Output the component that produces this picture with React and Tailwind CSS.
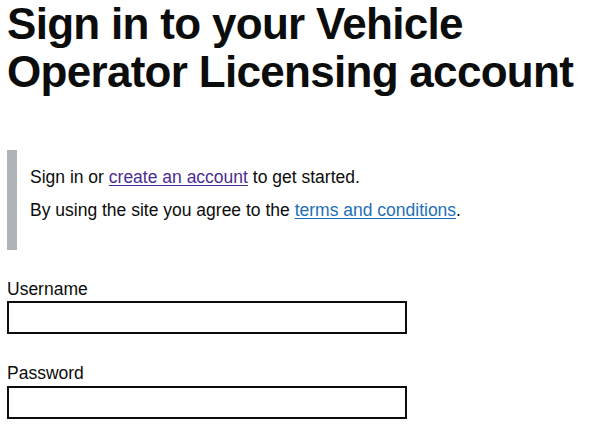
export default function App() {
  return (
    <div className="min-h-[426px] bg-white px-[7px] text-[#0b0c0c] font-['Liberation_Sans',Arial,sans-serif]">
      <h1 className="text-[44px] font-bold leading-[48px] tracking-[-0.7px]">
        Sign in to your Vehicle Operator Licensing account
      </h1>

      <div className="mt-[54px] border-l-[10px] border-[#b1b4b6] pl-[13px] pt-[15px] pb-[27px] text-[17.5px] leading-[25px]">
        <p>
          Sign in or{' '}
          <a href="#" className="text-[#4c2c92] underline underline-offset-2">create an account</a>{' '}
          to get started.
        </p>
        <p className="mt-[8px]">
          By using the site you agree to the{' '}
          <a href="#" className="text-[#1d70b8] underline underline-offset-2">terms and conditions</a>.
        </p>
      </div>

      <form className="mt-[27px] flex flex-col">
        <label htmlFor="username" className="block text-[17.5px] leading-[25px]">Username</label>
        <input id="username" type="text" className="mt-[-1px] h-[33px] w-[400px] border-2 border-[#0b0c0c] bg-white" />

        <label htmlFor="password" className="mt-[27px] block text-[17.5px] leading-[25px]">Password</label>
        <input id="password" type="password" className="mt-0 h-[33px] w-[400px] border-2 border-[#0b0c0c] bg-white" />
      </form>
    </div>
  );
}
